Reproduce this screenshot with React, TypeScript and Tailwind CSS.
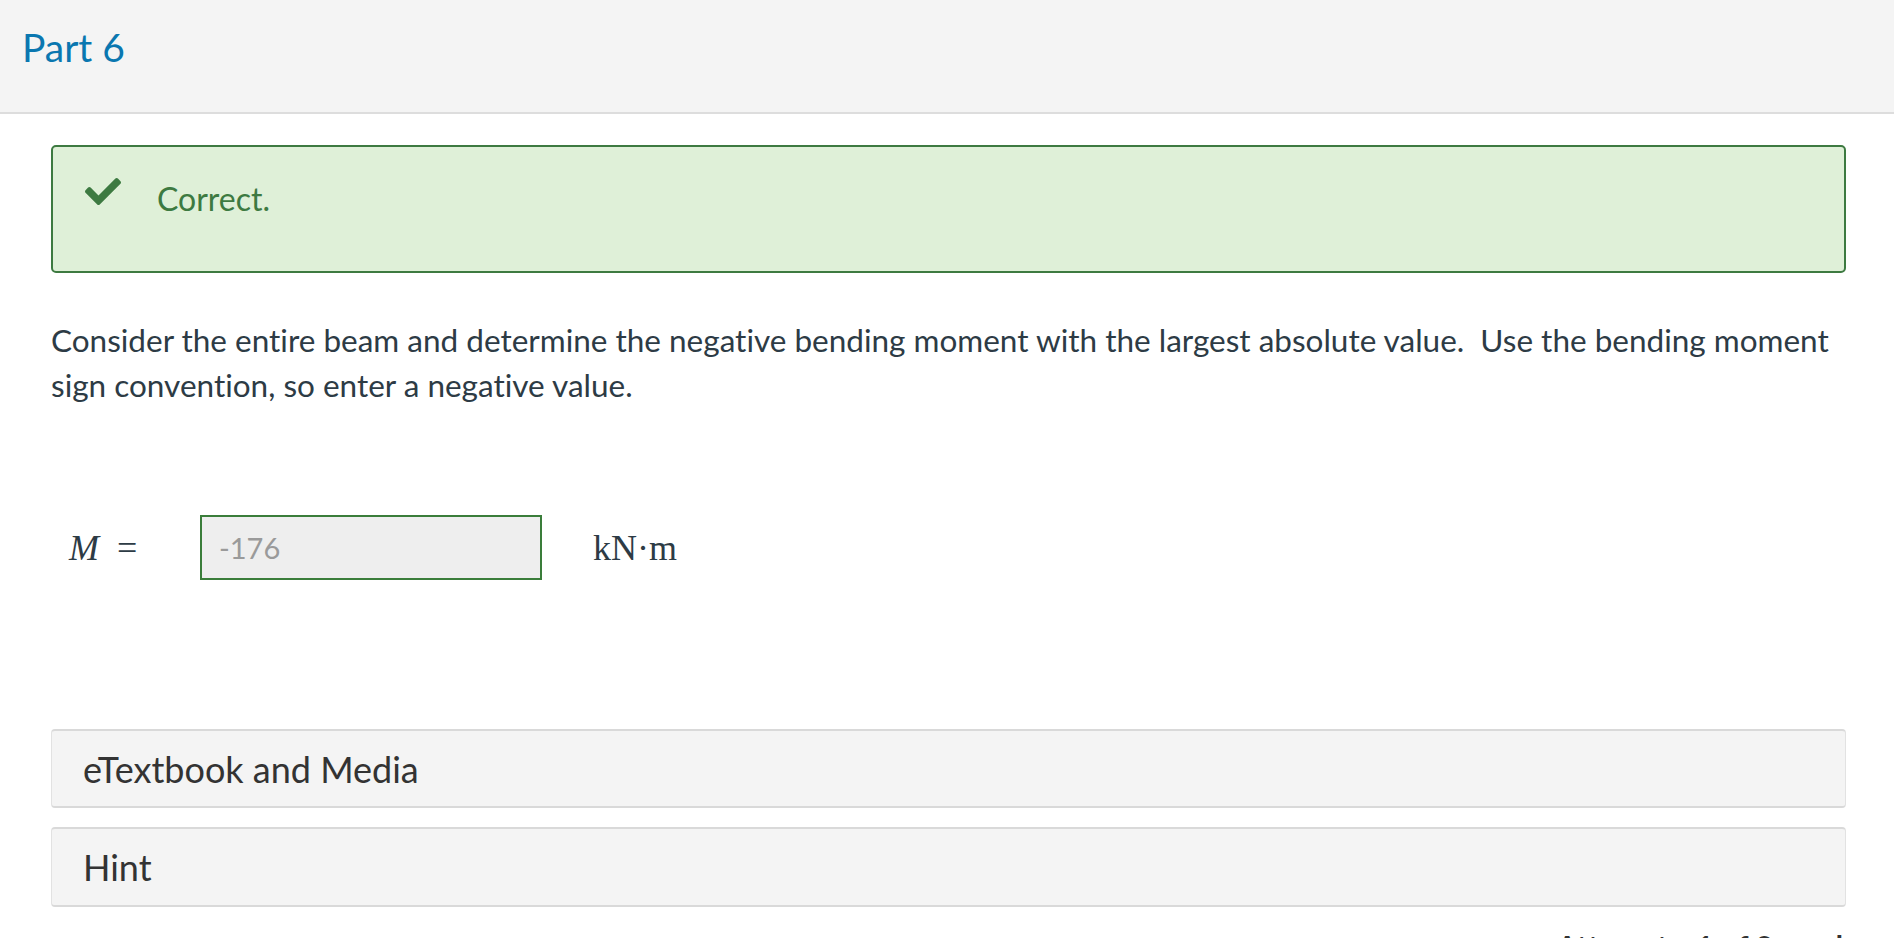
export default function App() {
  return (
    <div className="min-h-screen bg-white font-[Lato,sans-serif] [font-variant-ligatures:none]">
      <header className="h-[114px] border-b-2 border-[#dddddd] bg-[#f4f4f4] pl-[22px] pt-[28px]">
        <h2 className="text-[39px] leading-none text-[#0a77b0]">Part 6</h2>
      </header>

      <main className="pl-[51px] pr-[48px]">
        <div className="mt-[31px] flex h-[128px] items-start rounded-[5px] border-2 border-[#3d7a41] bg-[#dff0d8] pl-[32px] pt-[31px]">
          <svg viewBox="0 64 512 384" width="36" height="27" className="shrink-0 fill-[#3d7a41]">
            <path d="M173.898 439.404l-166.4-166.4c-9.997-9.997-9.997-26.206 0-36.204l36.203-36.204c9.997-9.998 26.207-9.998 36.204 0L192 312.69 432.095 72.596c9.997-9.997 26.207-9.997 36.204 0l36.203 36.204c9.997 9.997 9.997 26.206 0 36.204l-294.4 294.401c-9.998 9.997-26.207 9.997-36.204-.001z" />
          </svg>
          <span className="ml-[36px] mt-[3px] text-[32px] leading-[36px] text-[#3d7a41]">Correct.</span>
        </div>

        <p className="mt-[45px] text-[31.5px] leading-[45px] text-[#2d3b45]">
          Consider the entire beam and determine the negative bending moment with the largest absolute value.&nbsp; Use
          the bending moment sign convention, so enter a negative value.
        </p>

        <div className="mt-[107px] flex items-center pl-[18px] font-['Liberation_Serif',serif] text-[36px] text-[#2d3b45]">
          <span className="w-[48px] italic">M</span>
          <span className="w-[83px]">=</span>
          <div className="flex h-[65px] w-[342px] items-center border-2 border-[#3a7d3a] bg-[#eeeeee] pl-[17px] font-[Lato,sans-serif] text-[29px] text-[#9a9a9a]">
            -176
          </div>
          <span className="ml-[51px]">kN·m</span>
        </div>

        <div className="mt-[149px] flex flex-col gap-[19px]">
          <div className="flex h-[79px] items-center rounded-[4px] border border-y-2 border-[#e2e2e2] border-y-[#d9d9d9] bg-[#f4f4f4] pl-[31px] text-[36px] text-[#333333]">
            eTextbook and Media
          </div>
          <div className="flex h-[80px] items-center rounded-[4px] border border-y-2 border-[#e2e2e2] border-y-[#d9d9d9] bg-[#f4f4f4] pl-[31px] text-[36px] text-[#333333]">
            Hint
          </div>
        </div>

        <div className="mt-[17px] pr-[3px] text-right text-[30px] font-bold leading-[45px] text-[#333333]">
          Attempts: 1 of 3 used
        </div>
      </main>
    </div>
  );
}
